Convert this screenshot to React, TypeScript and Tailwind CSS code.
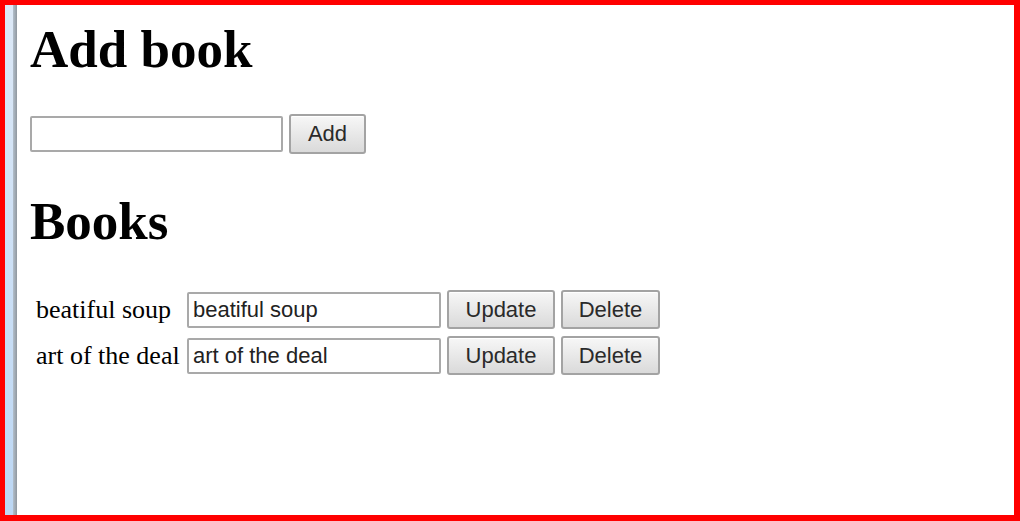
import React from 'react';

const books = ['beatiful soup', 'art of the deal'];

const btn =
  "h-[39px] rounded-[3px] border-2 border-[#a3a3a3] bg-linear-to-b from-[#f7f7f7] to-[#dadada] text-[22px] leading-none text-[#2a2a2a] font-['Liberation_Sans',Arial,sans-serif] shadow-[inset_0_1px_0_#ffffff]";

const field =
  "h-[36px] rounded-[2px] border-2 border-[#a9a9a9] bg-white px-[4px] text-[22px] text-[#222] font-['Liberation_Sans',Arial,sans-serif] outline-none";

export default function App() {
  return (
    <div className="flex h-[521px] w-[1020px] border-t-[5px] border-r-[6px] border-b-[6px] border-l-[5px] border-[#ff0000] bg-white">
      {/* browser side strip */}
      <div className="w-[8px] bg-linear-to-b from-[#dde9f7] to-[#bcd7f4]" />
      <div className="w-[4px] bg-linear-to-r from-[#b3bfcb] to-[#8f979f]" />

      <div className="flex-1 pl-[13px] pt-[14px] font-['Liberation_Serif','Times_New_Roman',serif] text-black">
        <h1 className="text-[53px] font-bold leading-[61px]">Add book</h1>

        <div className="mt-[34px] flex items-center">
          <input className={`${field} w-[253px]`} defaultValue="" />
          <button className={`${btn} ml-[6px] h-[40px] w-[77px]`}>Add</button>
        </div>

        <h2 className="mt-[37px] text-[53px] font-bold leading-[61px]">Books</h2>

        <div className="mt-[38px] flex flex-col gap-[7px]">
          {books.map((b) => (
            <div key={b} className="flex h-[39px] items-center">
              <span className="w-[157px] pl-[6px] text-[26px] leading-none whitespace-nowrap">{b}</span>
              <input className={`${field} w-[254px]`} defaultValue={b} />
              <button className={`${btn} ml-[6px] w-[108px]`}>Update</button>
              <button className={`${btn} ml-[6px] w-[99px]`}>Delete</button>
            </div>
          ))}
        </div>
      </div>
    </div>
  );
}
